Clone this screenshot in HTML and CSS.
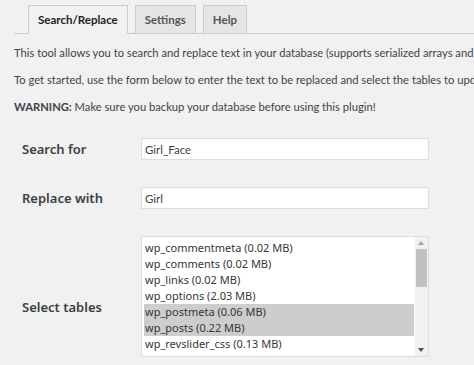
FILE: index.html
```html
<!DOCTYPE html>
<html lang="en">
<head>
  <meta charset="UTF-8" />
  <title>Search &amp; Replace</title>
  <link rel="stylesheet" href="styles.css">
</head>
<body>

<div class="wrap">
  <nav class="tabs">
    <a class="tab active">Search/Replace</a>
    <a class="tab">Settings</a>
    <a class="tab">Help</a>
  </nav>

  <p>This tool allows you to search and replace text in your database (supports serialized arrays and objects).</p>
  <p>To get started, use the form below to enter the text to be replaced and select the tables to update.</p>
  <p><strong>WARNING:</strong> Make sure you backup your database before using this plugin!</p>

  <div class="form-table">
    <div class="row">
      <label class="label">Search for</label>
      <input class="field" type="text" value="Girl_Face">
    </div>
    <div class="row">
      <label class="label">Replace with</label>
      <input class="field" type="text" value="Girl">
    </div>
    <div class="row row-tables">
      <label class="label">Select tables</label>
      <div class="table-list">
        <ul class="options">
          <li>wp_commentmeta (0.02 MB)</li>
          <li>wp_comments (0.02 MB)</li>
          <li>wp_links (0.02 MB)</li>
          <li>wp_options (2.03 MB)</li>
          <li class="selected">wp_postmeta (0.06 MB)</li>
          <li class="selected">wp_posts (0.22 MB)</li>
          <li>wp_revslider_css (0.13 MB)</li>
          <li>wp_revslider_layer_animations (0.00 MB)</li>
        </ul>
        <div class="scrollbar">
          <span class="arrow up"></span>
          <div class="track"><div class="thumb"></div></div>
          <span class="arrow down"></span>
        </div>
      </div>
    </div>
  </div>
</div>

</body>
</html>
```

FILE: styles.css
```css
* {
  box-sizing: border-box;
}

body {
  margin: 0;
  background: #f1f1f1;
  font-family: Lato, "Noto Sans", sans-serif;
  font-size: 11.2px;
  color: #3c434a;
  overflow: hidden;
}

.wrap {
  padding: 5px 0 0 14px;
  width: 640px;
}

/* tabs */
.tabs {
  display: flex;
  gap: 7px;
  padding-left: 14px;
  border-bottom: 1px solid #ccc;
}

.tab {
  display: block;
  height: 29px;
  padding: 0 9px;
  line-height: 28px;
  font-size: 11.5px;
  font-weight: 700;
  color: #555;
  background: #e5e5e5;
  border: 1px solid #ccc;
  margin-bottom: -1px;
  text-decoration: none;
}

.tab.active {
  color: #222;
  background: #f1f1f1;
  border-bottom-color: #f1f1f1;
}

p {
  margin: 9px 0 0;
  line-height: 19px;
  white-space: nowrap;
}

p + p {
  margin-top: 8px;
}

strong {
  font-weight: 700;
}

/* form */
.form-table {
  margin-top: 22px;
  padding-left: 8px;
}

.row {
  display: flex;
  align-items: center;
  margin-bottom: 27px;
}

.row-tables {
  align-items: flex-start;
}

.label {
  width: 119px;
  font-family: "Noto Sans", sans-serif;
  font-size: 13px;
  font-weight: 600;
  line-height: 18px;
  color: #3a3f44;
}

.row-tables .label {
  margin-top: 62px;
}

.field {
  width: 288px;
  height: 22px;
  padding: 0 3px;
  border: 1px solid #ddd;
  background: #fff;
  font-family: Lato, sans-serif;
  font-size: 11.5px;
  color: #3c434a;
  box-shadow: inset 0 1px 2px rgba(0, 0, 0, 0.04);
  outline: none;
}

.table-list {
  display: flex;
  width: 288px;
  height: 121px;
  border: 1px solid #ddd;
  background: #fff;
  overflow: hidden;
}

.options {
  flex: 1;
  list-style: none;
  margin: 0;
  padding: 3px 1px 0 2px;
  font-family: "Noto Sans", sans-serif;
  font-size: 11px;
  color: #32373c;
  overflow: hidden;
}

.options li {
  height: 16px;
  line-height: 16px;
  padding-left: 1px;
  white-space: nowrap;
}

.options li.selected {
  background: #cdcdcd;
}

.scrollbar {
  display: flex;
  flex-direction: column;
  width: 13px;
  background: #f1f1f1;
}

.arrow {
  display: block;
  height: 12px;
  position: relative;
}

.arrow::after {
  content: '';
  position: absolute;
  left: 3px;
  border-left: 3.5px solid transparent;
  border-right: 3.5px solid transparent;
}

.arrow.up::after {
  top: 4px;
  border-bottom: 4px solid #a3a3a3;
}

.arrow.down::after {
  top: 4px;
  border-top: 4px solid #505050;
}

.track {
  flex: 1;
  padding: 0 1px;
}

.thumb {
  height: 38px;
  background: #c1c1c1;
}
```
